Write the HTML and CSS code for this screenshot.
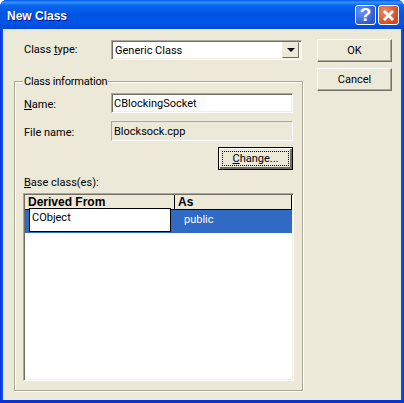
FILE: index.html
```html
<!DOCTYPE html>
<html lang="en">
  <head>
    <meta charset="UTF-8" />
    <title>New Class</title>
    <link rel="stylesheet" href="styles.css">
  </head>
  <body>
    <div class="window">
      <div class="title-bar">
        <span class="title">New Class</span>
        <div class="title-buttons">
          <div class="title-btn help">?</div>
          <div class="title-btn close">
            <svg width="13" height="13" viewBox="0 0 13 13">
              <path d="M2 2 L11 11 M11 2 L2 11" stroke="#fff" stroke-width="2.8" fill="none" />
            </svg>
          </div>
        </div>
      </div>

      <div class="dialog">
        <div class="main-col">
          <div class="type-row">
            <label class="row-label">Class <u>t</u>ype:</label>
            <div class="combo sunken">
              <span>Generic Class</span>
              <div class="combo-arrow"><div class="arrow"></div></div>
            </div>
          </div>

          <div class="group">
            <span class="legend">Class information</span>
            <div class="field-row name-row">
              <label class="row-label"><u>N</u>ame:</label>
              <div class="field sunken">CBlockingSocket</div>
            </div>
            <div class="field-row file-row">
              <label class="row-label">File name:</label>
              <div class="field flat">Blocksock.cpp</div>
            </div>
            <div class="change-row">
              <button class="btn default"><span class="focus"><u>C</u>hange...</span></button>
            </div>
            <label class="list-label"><u>B</u>ase class(es):</label>
            <div class="list sunken">
              <div class="list-head">
                <div class="head-cell derived">Derived From</div>
                <div class="head-cell as">As</div>
              </div>
              <div class="list-row">
                <div class="cell-derived"></div>
                <div class="cell-as">public</div>
              </div>
              <div class="cell-edit">CObject</div>
            </div>
          </div>
        </div>

        <div class="side-col">
          <button class="btn">OK</button>
          <button class="btn">Cancel</button>
        </div>
      </div>
    </div>
  </body>
</html>
```

FILE: styles.css
```css
* {
  margin: 0;
  padding: 0;
  box-sizing: border-box;
}

body {
  font-family: Roboto, "Liberation Sans", Arial, sans-serif;
  font-size: 11px;
  color: #000;
  background: #fff;
}

.window {
  width: 404px;
  height: 403px;
  display: flex;
  flex-direction: column;
  border-radius: 7px 7px 0 0;
  border-bottom: 3px solid #0831d9;
  background: #0553ea;
  box-shadow: inset 1px 0 0 #0831d9, inset -1px 0 0 #0831d9;
}

/* Title bar */
.title-bar {
  height: 29px;
  flex: none;
  display: flex;
  justify-content: space-between;
  align-items: center;
  padding: 1px 5px 0 7px;
  border-radius: 7px 7px 0 0;
  background: linear-gradient(#0058ee 0%, #3593ff 8%, #0a66f0 18%, #0054e3 50%, #0055ea 80%, #0047d0 100%);
}

.title {
  color: #fff;
  font-family: "Liberation Sans", Arial, sans-serif;
  font-size: 12px;
  font-weight: bold;
  padding-top: 2px;
  text-shadow: 1px 1px 0 #0f1089;
}

.title-buttons {
  display: flex;
  gap: 2px;
}

.title-btn {
  width: 21px;
  height: 20px;
  border: 1px solid #fff;
  border-radius: 3px;
  display: flex;
  align-items: center;
  justify-content: center;
  color: #fff;
}

.help {
  background: radial-gradient(circle at 30% 30%, #6d97ee, #2c58d6 75%);
  font-family: "Liberation Sans", Arial, sans-serif;
  font-size: 19px;
  font-weight: bold;
}

.close {
  background: radial-gradient(circle at 30% 30%, #eb8b6c, #d3481f 75%);
}

/* Dialog body */
.dialog {
  flex: 1;
  margin: 0 3px;
  padding-left: 11px;
  display: flex;
  gap: 14px;
  background: #ece9d8;
}

.main-col {
  width: 289px;
  padding-top: 11px;
}

.side-col {
  width: 75px;
  padding-top: 10px;
  display: flex;
  flex-direction: column;
  gap: 6px;
}

.sunken {
  border: 1px solid;
  border-color: #aca899 #fff #fff #aca899;
  box-shadow: inset 1px 1px 0 #716f64, inset -1px -1px 0 #f1efe2;
  background: #fff;
}

.row-label {
  width: 97px;
  padding-left: 10px;
  flex: none;
}

.type-row {
  display: flex;
  align-items: center;
}

.type-row .row-label {
  padding-bottom: 2px;
}

.combo {
  width: 191px;
  height: 20px;
  padding: 0 2px 0 3px;
  display: flex;
  align-items: center;
  justify-content: space-between;
}

.combo-arrow {
  width: 17px;
  height: 16px;
  background: #ece9d8;
  border: 1px solid;
  border-color: #f1efe2 #716f64 #716f64 #f1efe2;
  display: flex;
  align-items: center;
  justify-content: center;
}

.arrow {
  border-left: 4px solid transparent;
  border-right: 4px solid transparent;
  border-top: 4px solid #000;
}

/* Group box */
.group {
  position: relative;
  height: 310px;
  margin-top: 21px;
  padding: 11px 9px 0 0;
  border: 1px solid #aca899;
  box-shadow: inset 1px 1px 0 #fff, 1px 1px 0 #fff;
}

.legend {
  position: absolute;
  top: -7px;
  left: 8px;
  padding: 0 1px;
  letter-spacing: -0.2px;
  background: #ece9d8;
}

.field-row {
  display: flex;
  align-items: center;
}

.field-row .row-label {
  width: 96px;
  padding: 2px 0 0 9px;
}

.field {
  width: 182px;
  height: 20px;
  padding-left: 2px;
  line-height: 20px;
}

.file-row {
  margin-top: 8px;
}

.flat {
  border: 1px solid;
  border-color: #aca899 #fff #fff #aca899;
}

.change-row {
  display: flex;
  justify-content: flex-end;
  margin-top: 6px;
}

/* Buttons */
.btn {
  width: 75px;
  height: 23px;
  font-family: inherit;
  font-size: inherit;
  background: #ece9d8;
  border: 1px solid;
  border-color: #fff #716f64 #716f64 #fff;
  box-shadow: inset -1px -1px 0 #aca899;
}

.btn.default {
  outline: 1px solid #000;
  outline-offset: -1px;
  box-shadow: inset 1px 1px 0 #fff, inset -2px -2px 0 #716f64;
}

.focus {
  display: block;
  margin: 3px;
  height: 15px;
  line-height: 13px;
  border: 1px dotted #000;
}

/* Base class list */
.list-label {
  display: block;
  margin: 6px 0 0 9px;
  height: 14px;
}

.list {
  position: relative;
  width: 271px;
  height: 188px;
  margin: 3px 0 0 8px;
  padding: 1px 1px 0 1px;
}

.list-head {
  display: flex;
  height: 15px;
  font-family: "Liberation Sans", Arial, sans-serif;
  font-size: 12px;
  font-weight: bold;
  background: #ece9d8;
  border-bottom: 1px solid #000;
}

.head-cell {
  padding-left: 3px;
  line-height: 14px;
  border-right: 1px solid #000;
}

.derived {
  width: 150px;
}

.as {
  flex: 1;
}

.list-row {
  display: flex;
  height: 23px;
  background: #316ac5;
  color: #fff;
}

.cell-derived {
  width: 150px;
}

.cell-as {
  padding-left: 9px;
  line-height: 20px;
}

.cell-edit {
  position: absolute;
  top: 14px;
  left: 5px;
  width: 142px;
  height: 24px;
  padding-left: 2px;
  line-height: 18px;
  background: #fff;
  border: 1px solid #000;
}
```
